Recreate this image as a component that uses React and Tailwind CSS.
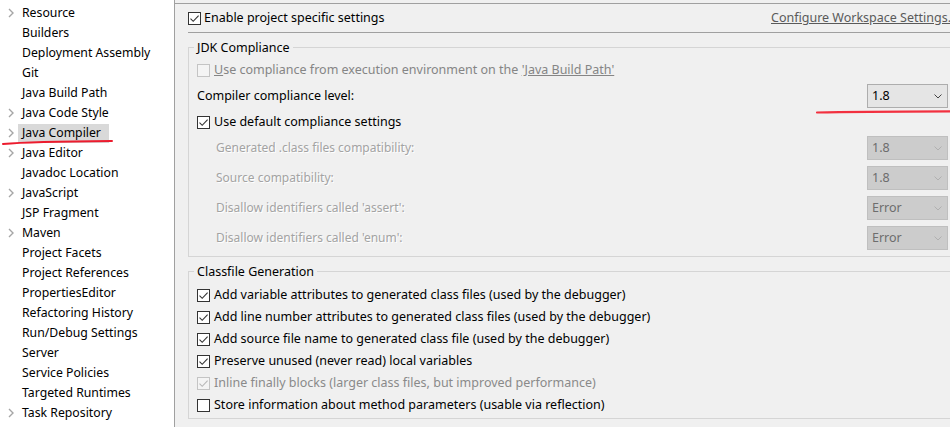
import React from 'react';

const items = [
  { label: 'Resource', arrow: true },
  { label: 'Builders' },
  { label: 'Deployment Assembly' },
  { label: 'Git' },
  { label: 'Java Build Path' },
  { label: 'Java Code Style', arrow: true },
  { label: 'Java Compiler', arrow: true, selected: true },
  { label: 'Java Editor', arrow: true },
  { label: 'Javadoc Location' },
  { label: 'JavaScript', arrow: true },
  { label: 'JSP Fragment' },
  { label: 'Maven', arrow: true },
  { label: 'Project Facets' },
  { label: 'Project References' },
  { label: 'PropertiesEditor' },
  { label: 'Refactoring History' },
  { label: 'Run/Debug Settings' },
  { label: 'Server' },
  { label: 'Service Policies' },
  { label: 'Targeted Runtimes' },
  { label: 'Task Repository', arrow: true },
  { label: 'Task Tags' },
];

const Check = ({ checked, disabled }) => (
  <span
    className={
      disabled
        ? 'w-[13px] h-[13px] border border-[#c4c4c4] bg-[#f4f4f4] flex items-center justify-center shrink-0'
        : 'w-[13px] h-[13px] border border-[#333333] bg-white flex items-center justify-center shrink-0'
    }
  >
    {checked && (
      <svg width="11" height="11" viewBox="0 0 11 11">
        <path d="M1.5 5.6 L4.2 8.3 L9.6 2.6" fill="none" stroke={disabled ? '#b8b8b8' : '#333333'} strokeWidth="1.1" />
      </svg>
    )}
  </span>
);

const Combo = ({ value, disabled }) => (
  <div
    className={
      disabled
        ? 'w-[81px] h-[24px] border border-[#bfbfbf] bg-[#cccccc] flex items-center justify-between pl-[4px] pr-[5px] text-[#6d6d6d]'
        : 'w-[81px] h-[24px] border border-[#adadad] bg-[#e5e5e5] flex items-center justify-between pl-[4px] pr-[5px] text-black'
    }
  >
    <span>{value}</span>
    <svg width="8" height="5" viewBox="0 0 8 5">
      <path d="M0.5 0.5 L4 4 L7.5 0.5" fill="none" stroke={disabled ? '#b0b0b0' : '#444444'} strokeWidth="1" />
    </svg>
  </div>
);

const CheckRow = ({ checked, disabled, children }) => (
  <div className="h-[22px] flex items-center gap-[4px] whitespace-nowrap">
    <Check checked={checked} disabled={disabled} />
    <span className={disabled ? 'text-[#8a8a8a]' : 'text-black'}>{children}</span>
  </div>
);

const DisabledRow = ({ label, value }) => (
  <div className="h-[24px] flex items-center justify-between">
    <span className="pl-[19px] text-[12px] text-[#a3a3a3] [text-shadow:1px_1px_0_#ffffff]">{label}</span>
    <Combo value={value} disabled />
  </div>
);

export default function App() {
  return (
    <div className="w-[950px] h-[427px] overflow-hidden flex bg-[#f0f0f0] font-['Noto_Sans',sans-serif] text-[12.5px] relative">
      <div className="w-[175px] shrink-0 h-full bg-white border-r border-[#a0a0a0] pt-[3px] relative text-[12.25px]">
        {items.map((it) => (
          <div key={it.label} className="h-[20px] flex items-center whitespace-nowrap">
            <span className="w-[18px] flex justify-center pl-[4px]">
              {it.arrow && (
                <svg width="7" height="10" viewBox="0 0 7 10">
                  <path d="M1 1 L5 5 L1 9" fill="none" stroke="#a6a6a6" strokeWidth="1.4" />
                </svg>
              )}
            </span>
            <span className={it.selected ? 'pl-[4px] pr-[8px] h-[19px] flex items-center bg-[#d9d9d9] text-black' : 'px-[4px] text-black'}>
              {it.label}
            </span>
          </div>
        ))}
        <svg className="absolute left-0 top-[138px]" width="120" height="10" viewBox="0 0 120 10">
          <path d="M3 6 Q 30 3.5 112 3" fill="none" stroke="#ec1c2e" strokeWidth="2" strokeLinecap="round" />
        </svg>
      </div>

      <div className="flex-1 relative">
        <div className="mt-[3px] border-t border-[#a0a0a0]">
          <div className="ml-[13px] h-[29px] border-b border-[#a0a0a0] flex items-center whitespace-nowrap">
            <div className="w-[583px] flex items-center gap-[3px] pt-[1px]">
              <Check checked />
              <span>Enable project specific settings</span>
            </div>
            <span className="text-[#5a5a5a] underline pt-[1px]">Configure Workspace Settings...</span>
          </div>

          <div className="ml-[13px] mt-[14px] w-[800px] border border-[#d5d5d5] relative pl-[8px] pt-[9px] pb-[6px]">
            <span className="absolute -top-[10px] left-[5px] px-[3px] bg-[#f0f0f0] leading-[20px]">JDK Compliance</span>
            <div className="w-[751px]">
              <div className="h-[26px] flex items-center gap-[4px] whitespace-nowrap">
                <Check disabled />
                <span className="text-[#858585]">
                  <span className="underline">U</span>se compliance from execution environment on the{' '}
                  <span className="underline">'Java Build Path'</span>
                </span>
              </div>
              <div className="h-[26px] flex items-center justify-between">
                <span>Compiler compliance level:</span>
                <Combo value="1.8" />
              </div>
              <div className="h-[26px] flex items-center gap-[4px]">
                <Check checked />
                <span>Use default compliance settings</span>
              </div>
              <div className="mt-[1px] flex flex-col gap-[6px]">
                <DisabledRow label="Generated .class files compatibility:" value="1.8" />
                <DisabledRow label="Source compatibility:" value="1.8" />
                <DisabledRow label="Disallow identifiers called 'assert':" value="Error" />
                <DisabledRow label="Disallow identifiers called 'enum':" value="Error" />
              </div>
            </div>
          </div>

          <div className="ml-[13px] mt-[14px] w-[800px] border border-[#d5d5d5] relative pl-[8px] pt-[12px] pb-[2px]">
            <span className="absolute -top-[10px] left-[5px] px-[3px] bg-[#f0f0f0] leading-[20px]">Classfile Generation</span>
            <CheckRow checked>Add variable attributes to generated class files (used by the debugger)</CheckRow>
            <CheckRow checked>Add line number attributes to generated class files (used by the debugger)</CheckRow>
            <CheckRow checked>Add source file name to generated class file (used by the debugger)</CheckRow>
            <CheckRow checked>Preserve unused (never read) local variables</CheckRow>
            <CheckRow checked disabled>Inline finally blocks (larger class files, but improved performance)</CheckRow>
            <CheckRow>Store information about method parameters (usable via reflection)</CheckRow>
          </div>
        </div>

        <svg className="absolute left-[640px] top-[109px]" width="140" height="6" viewBox="0 0 140 6">
          <path d="M2 3.5 Q 40 2.6 140 2.4" fill="none" stroke="#f2303f" strokeWidth="2.2" strokeLinecap="round" />
        </svg>
      </div>
    </div>
  );
}
